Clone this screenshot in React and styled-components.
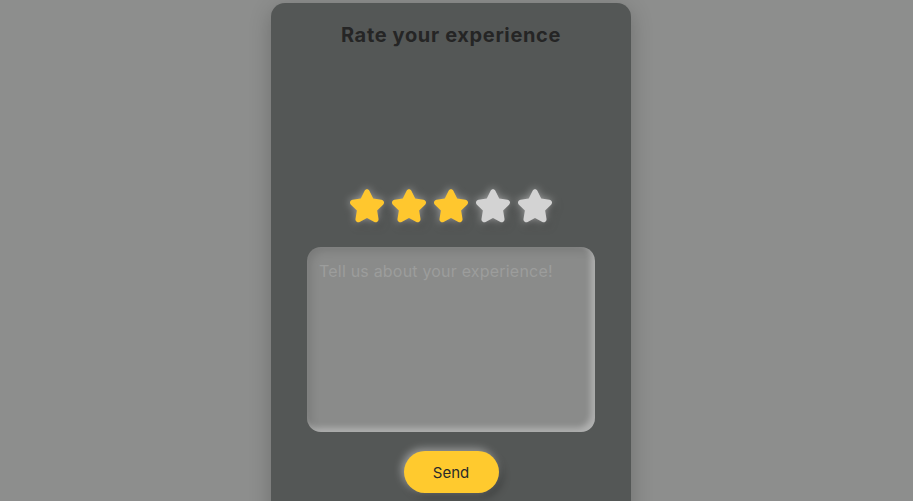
import React, { useState } from 'react'
import styled, { createGlobalStyle } from 'styled-components'

const Global = createGlobalStyle`
  html, body {
    margin: 0;
    padding: 0;
    background: #8d8e8d;
    font-family: 'Inter', 'DejaVu Sans', sans-serif;
    overflow: hidden;
  }
`;

const Page = styled.div`
  display: flex;
  justify-content: center;
  padding-top: 3px;
  height: 498px;
`;

const Card = styled.div`
  width: 360px;
  margin-right: 11px;
  height: 520px;
  background: #545756;
  border-radius: 14px;
  box-shadow: 0 6px 22px rgba(0, 0, 0, 0.22);
  display: flex;
  flex-direction: column;
  align-items: center;
  box-sizing: border-box;
  padding-top: 20px;
`;

const Title = styled.h2`
  margin: 0;
  font-size: 20px;
  font-weight: 700;
  color: #252525;
  letter-spacing: 0.65px;
`;

const Stars = styled.div`
  display: flex;
  gap: 2px;
  margin-top: 139px;
  margin-left: -1px;
`;

const StarButton = styled.button`
  border: none;
  background: none;
  padding: 0;
  width: 40px;
  height: 40px;
  cursor: pointer;
  filter: drop-shadow(0 0 4px rgba(255, 255, 255, 0.55))
    drop-shadow(2px 3px 3px rgba(0, 0, 0, 0.35));
  svg {
    display: block;
    width: 40px;
    height: 40px;
  }
  path {
    fill: ${(p) => (p.$on ? '#ffc72e' : '#d3d3d3')};
  }
`;

const Feedback = styled.textarea`
  margin-top: 21px;
  width: 288px;
  height: 185px;
  box-sizing: border-box;
  resize: none;
  border: none;
  outline: none;
  border-radius: 14px;
  background: #8a8b8a;
  padding: 14px 12px;
  font-family: inherit;
  font-size: 16px;
  letter-spacing: 0.2px;
  color: #333;
  box-shadow: inset -4px -4px 6px rgba(255, 255, 255, 0.35),
    inset 4px 4px 8px rgba(0, 0, 0, 0.12);
  &::placeholder {
    color: #9c9d9c;
  }
`;

const Send = styled.button`
  margin-top: 19px;
  width: 95px;
  height: 42px;
  border: none;
  border-radius: 21px;
  background: #ffca2e;
  color: #2a2a2a;
  font-family: inherit;
  font-size: 15px;
  cursor: pointer;
  box-shadow: -2px -2px 8px rgba(255, 255, 255, 0.45),
    3px 4px 8px rgba(0, 0, 0, 0.3);
`;

const starPath =
  'M16 2.6c.9 0 1.6.5 2 1.3l3 6.1 6.6 1c.9.1 1.6.7 1.9 1.6.3.8 0 1.7-.6 2.3l-4.8 4.7 1.1 6.6c.2.9-.2 1.8-.9 2.3-.7.5-1.7.6-2.4.2L16 25.5l-5.9 3.2c-.8.4-1.7.3-2.4-.2-.7-.5-1.1-1.4-.9-2.3l1.1-6.6-4.8-4.7c-.6-.6-.9-1.5-.6-2.3.3-.9 1-1.5 1.9-1.6l6.6-1 3-6.1c.4-.8 1.1-1.3 2-1.3z';

export default function App() {
  const [rating, setRating] = useState(3);
  return (
    <>
      <Global />
      <Page>
        <Card>
          <Title>Rate your experience</Title>
          <Stars>
            {[1, 2, 3, 4, 5].map((n) => (
              <StarButton key={n} $on={n <= rating} onClick={() => setRating(n)}>
                <svg viewBox="0 0 32 32">
                  <path d={starPath} />
                </svg>
              </StarButton>
            ))}
          </Stars>
          <Feedback placeholder="Tell us about your experience!" />
          <Send>Send</Send>
        </Card>
      </Page>
    </>
  )
}
